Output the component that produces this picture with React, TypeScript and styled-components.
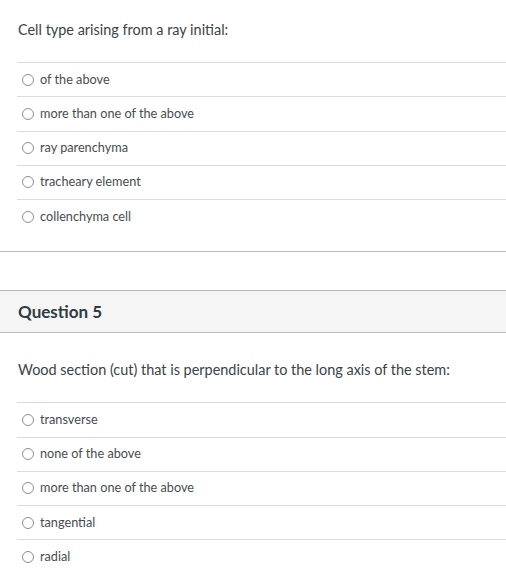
import * as React from "react";
import styled, { createGlobalStyle } from "styled-components";

const GlobalStyle = createGlobalStyle`
  body {
    margin: 0;
    background: #ffffff;
    font-family: Lato, "Liberation Sans", sans-serif;
    color: #2d3b45;
  }
`;

const Page = styled.div`
  width: 506px;
  display: flex;
  flex-direction: column;
`;

const QuestionBlock = styled.section<{ $top: number }>`
  padding-top: ${(p) => p.$top}px;
`;

const QuestionText = styled.p`
  margin: 0 0 0 18px;
  font-size: 14.45px;
  line-height: 18px;
  height: 41px;
  color: #39434a;
`;

const AnswerList = styled.ul`
  list-style: none;
  margin: 0 0 0 17px;
  padding: 0;
`;

const AnswerRow = styled.li`
  display: flex;
  align-items: center;
  gap: 6px;
  height: 31.25px;
  padding: 0 0 2px 5px;
  border-top: 1px solid #dcdcdc;
  font-size: 12.7px;
  color: #454d53;
`;

const Radio = styled.span`
  width: 10px;
  height: 10px;
  margin-top: 2px;
  border-radius: 50%;
  border: 1px solid #8a8f94;
  flex-shrink: 0;
`;

const Divider = styled.hr`
  margin: 18px 0 0;
  border: 0;
  border-top: 1px solid #b9b9b9;
`;

const Header = styled.header`
  margin-top: 38px;
  height: 41px;
  display: flex;
  align-items: center;
  padding-left: 18px;
  background: #f5f5f5;
  border-top: 1px solid #b9b9b9;
  border-bottom: 1px solid #b9b9b9;
`;

const HeaderTitle = styled.h2`
  margin: 0;
  font-size: 17px;
  font-weight: 700;
  color: #2d3b45;
`;

const Answer = ({ label }: { label: string }) => (
  <AnswerRow>
    <Radio />
    {label}
  </AnswerRow>
);

export default function App() {
  const first = [
    "of the above",
    "more than one of the above",
    "ray parenchyma",
    "tracheary element",
    "collenchyma cell",
  ];
  const second = [
    "transverse",
    "none of the above",
    "more than one of the above",
    "tangential",
    "radial",
  ];
  return (
    <Page>
      <GlobalStyle />
      <QuestionBlock $top={21}>
        <QuestionText>Cell type arising from a ray initial:</QuestionText>
        <AnswerList>
          {first.map((a) => (
            <Answer key={a} label={a} />
          ))}
        </AnswerList>
      </QuestionBlock>
      <Divider />
      <Header>
        <HeaderTitle>Question 5</HeaderTitle>
      </Header>
      <QuestionBlock $top={28}>
        <QuestionText>
          Wood section (cut) that is perpendicular to the long axis of the stem:
        </QuestionText>
        <AnswerList>
          {second.map((a) => (
            <Answer key={a} label={a} />
          ))}
        </AnswerList>
      </QuestionBlock>
    </Page>
  );
}
